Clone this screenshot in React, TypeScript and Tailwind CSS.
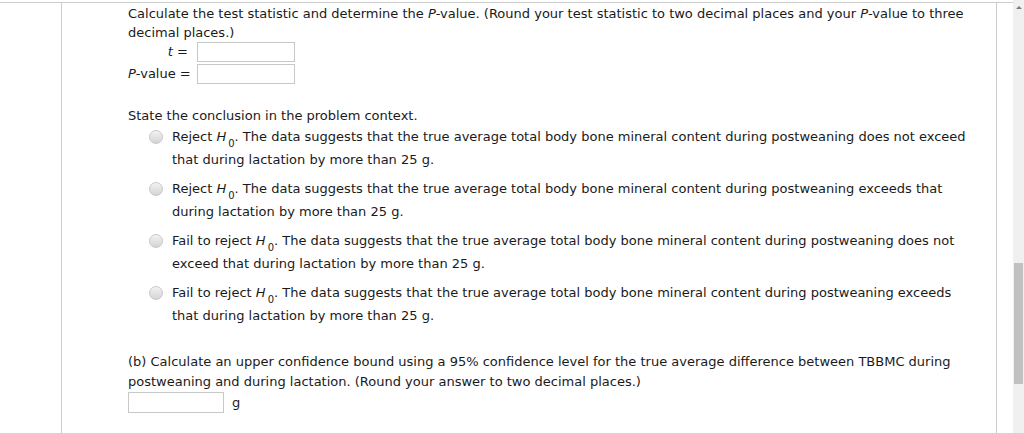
import React from "react";

const H0 = () => (
  <>
    <i>H</i>
    <sub className="ml-[2px] text-[10px] align-[-3px]">0</sub>
  </>
);

const Radio = () => (
  <span className="mt-[5px] mr-[9px] block h-[14px] w-[14px] shrink-0 rounded-full border border-[#c8c8c8] bg-gradient-to-b from-[#f2f2f2] to-[#d4d4d4]" />
);

const options: { lead: string; text: string }[] = [
  {
    lead: "Reject",
    text: ". The data suggests that the true average total body bone mineral content during postweaning does not exceed that during lactation by more than 25 g.",
  },
  {
    lead: "Reject",
    text: ". The data suggests that the true average total body bone mineral content during postweaning exceeds that during lactation by more than 25 g.",
  },
  {
    lead: "Fail to reject",
    text: ". The data suggests that the true average total body bone mineral content during postweaning does not exceed that during lactation by more than 25 g.",
  },
  {
    lead: "Fail to reject",
    text: ". The data suggests that the true average total body bone mineral content during postweaning exceeds that during lactation by more than 25 g.",
  },
];

const widths = ["w-[800px]", "w-[775px]", "w-[790px]", "w-[790px]"];

export default function App() {
  return (
    <div
      className="flex h-[433px] w-[1024px] overflow-hidden bg-white text-[13px] text-[#1a1a1a]"
      style={{ fontFamily: '"DejaVu Sans", Verdana, sans-serif' }}
    >
      <div className="flex flex-1 flex-col">
        <div className="h-[2px]" />
        <div className="flex flex-1 border-t border-[#cccccc]">
          <div className="w-[61px]" />
          <div className="w-[935px] border-l border-[#cccccc] pt-[1px] pl-[66px] pr-[20px]">
            {/* test statistic */}
            <p className="leading-[19px]">
              Calculate the test statistic and determine the <i>P</i>-value. (Round your test statistic to two decimal
              places and your <i>P</i>-value to three decimal places.)
            </p>
            <div className="flex flex-col gap-[2px]">
              <div className="flex items-center">
                <span className="w-[64px] pr-[4px] text-right">
                  <i>t</i> =
                </span>
                <span className="ml-[5px] block h-[20px] w-[98px] border border-[#c8c8c8]" />
              </div>
              <div className="flex items-center">
                <span className="w-[64px] pr-[4px] text-right whitespace-nowrap">
                  <i>P</i>-value =
                </span>
                <span className="ml-[5px] block h-[20px] w-[98px] border border-[#c8c8c8]" />
              </div>
            </div>

            {/* conclusion */}
            <p className="mt-[22px] leading-[19px]">State the conclusion in the problem context.</p>
            <div className="flex flex-col gap-[6px] pl-[21px]">
              {options.map((o, i) => (
                <div key={i} className="flex items-start">
                  <Radio />
                  <p className={`${widths[i]} leading-[23px]`}>
                    {o.lead} <H0 />
                    {o.text}
                  </p>
                </div>
              ))}
            </div>

            {/* part b */}
            <p className="mt-[25px] w-[840px] leading-[20px]">
              (b) Calculate an upper confidence bound using a 95% confidence level for the true average difference between
              TBBMC during postweaning and during lactation. (Round your answer to two decimal places.)
            </p>
            <div className="flex items-center">
              <span className="block h-[21px] w-[96px] border border-[#c8c8c8]" />
              <span className="ml-[8px]">g</span>
            </div>
          </div>
          <div className="flex-1 border-l border-[#cccccc]" />
        </div>
      </div>

      {/* scrollbar */}
      <div className="flex w-[11px] flex-col bg-[#f0f0f0]">
        <div className="flex h-[14px] items-center justify-center">
          <span className="block h-0 w-0 border-x-[3px] border-b-[3px] border-x-transparent border-b-[#7a7a7a]" />
        </div>
        <div className="h-[249px]" />
        <div className="mx-auto h-[121px] w-[9px] bg-[#c1c1c1]" />
      </div>
    </div>
  );
}
